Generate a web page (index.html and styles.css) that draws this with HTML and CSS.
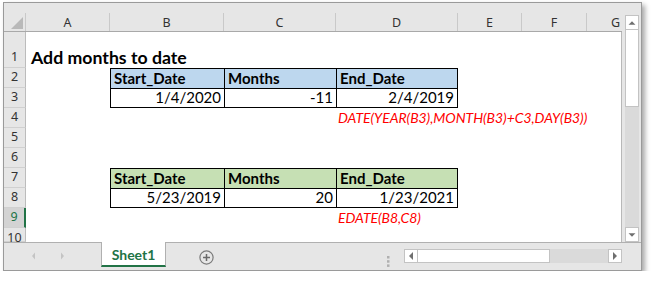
FILE: index.html
```html
<!DOCTYPE html>
<html>
<head>
<meta charset="utf-8">
<link rel="stylesheet" href="styles.css">
</head>
<body>
<div class="window">
  <div class="main">
    <div class="sheet">
      <div class="colheads">
        <div class="corner"><svg width="12" height="12" viewBox="0 0 12 12"><polygon points="12,0 12,12 0,12" fill="#b9b9b9"/></svg></div>
        <div class="ch wa">A</div>
        <div class="ch wb">B</div>
        <div class="ch wc">C</div>
        <div class="ch wd">D</div>
        <div class="ch we">E</div>
        <div class="ch wf">F</div>
        <div class="ch wg">G</div>
      </div>
      <div class="rows">
        <div class="row tall">
          <div class="rh">1</div>
          <div class="cell wa title">Add months to date</div>
        </div>
        <div class="row">
          <div class="rh">2</div>
          <div class="cell wa"></div>
          <div class="cell wb tb blue bold">Start_Date</div>
          <div class="cell wc tb blue bold">Months</div>
          <div class="cell wd tb blue bold last">End_Date</div>
        </div>
        <div class="row">
          <div class="rh">3</div>
          <div class="cell wa"></div>
          <div class="cell wb tb bottom num">1/4/2020</div>
          <div class="cell wc tb bottom num">-11</div>
          <div class="cell wd tb bottom last num">2/4/2019</div>
        </div>
        <div class="row">
          <div class="rh">4</div>
          <div class="cell wa"></div>
          <div class="cell wb"></div>
          <div class="cell wc"></div>
          <div class="cell wd formula">DATE(YEAR(B3),MONTH(B3)+C3,DAY(B3))</div>
        </div>
        <div class="row"><div class="rh">5</div></div>
        <div class="row"><div class="rh">6</div></div>
        <div class="row">
          <div class="rh">7</div>
          <div class="cell wa"></div>
          <div class="cell wb tb green bold">Start_Date</div>
          <div class="cell wc tb green bold">Months</div>
          <div class="cell wd tb green bold last">End_Date</div>
        </div>
        <div class="row">
          <div class="rh">8</div>
          <div class="cell wa"></div>
          <div class="cell wb tb bottom num">5/23/2019</div>
          <div class="cell wc tb bottom num">20</div>
          <div class="cell wd tb bottom last num">1/23/2021</div>
        </div>
        <div class="row">
          <div class="rh selected">9</div>
          <div class="cell wa"></div>
          <div class="cell wb"></div>
          <div class="cell wc"></div>
          <div class="cell wd formula">EDATE(B8,C8)</div>
        </div>
        <div class="row short"><div class="rh">10</div></div>
      </div>
    </div>
    <div class="vscroll">
      <div class="sbtn"><svg width="14" height="14" viewBox="0 0 14 14"><polygon points="3,9 11,9 7,5" fill="#6f6f6f"/></svg></div>
      <div class="vthumb"></div>
      <div class="vtrack"></div>
      <div class="sbtn"><svg width="14" height="14" viewBox="0 0 14 14"><polygon points="3,5 11,5 7,9" fill="#6f6f6f"/></svg></div>
    </div>
  </div>
  <div class="tabbar">
    <div class="nav">
      <svg width="97" height="14" viewBox="0 0 97 14"><polygon points="28,7 31,3.5 31,10.5" fill="#c4c4c4"/><polygon points="57,3.5 60,7 57,10.5" fill="#c4c4c4"/></svg>
    </div>
    <div class="tab">Sheet1</div>
    <div class="plus"><svg width="15" height="15" viewBox="0 0 15 15"><circle cx="7.5" cy="7.5" r="6.6" fill="none" stroke="#7b7b7b" stroke-width="1.2"/><path d="M7.5 4v7M4 7.5h7" stroke="#6a6a6a" stroke-width="1.5"/></svg></div>
    <div class="spacer"></div>
    <div class="dots"><svg width="3" height="11" viewBox="0 0 3 11"><rect x="0" y="0" width="2.5" height="2.5" fill="#b0b0b0"/><rect x="0" y="4.2" width="2.5" height="2.5" fill="#b0b0b0"/><rect x="0" y="8.4" width="2.5" height="2.5" fill="#b0b0b0"/></svg></div>
    <div class="hscroll">
      <div class="sbtn"><svg width="12" height="12" viewBox="0 0 12 12"><polygon points="4,6 8,2 8,10" fill="#6f6f6f"/></svg></div>
      <div class="hthumb"></div>
      <div class="htrack"></div>
      <div class="sbtn"><svg width="12" height="12" viewBox="0 0 12 12"><polygon points="4,2 8,6 4,10" fill="#6f6f6f"/></svg></div>
    </div>
  </div>
</div>
</body>
</html>
```
FILE: styles.css
```css
* { box-sizing: border-box; }
html, body { margin: 0; padding: 0; background: #fff; }
body { padding: 2px 0 0 3px; font-family: Lato, "Open Sans", sans-serif; }

.window {
  width: 639px;
  height: 269px;
  border: 1px solid #9a9a9a;
  background: #e6e6e6;
  box-shadow: 3px 3px 5px rgba(0,0,0,0.35);
  display: flex;
  flex-direction: column;
}
.main { display: flex; height: 239px; }
.sheet { width: 618px; display: flex; flex-direction: column; }

.colheads {
  display: flex;
  height: 29px;
  border-bottom: 1px solid #a9a9a9;
  background: #e6e6e6;
}
.corner, .ch {
  margin-top: 10px;
  height: 18px;
  border-right: 1px solid #c9c9c9;
}
.corner { width: 22px; display: flex; align-items: flex-end; justify-content: flex-end; padding: 0 2px 2px 0; }
.ch {
  display: flex; align-items: center; justify-content: center;
  font-family: "Noto Sans", sans-serif; font-size: 12.5px; color: #333;
}
.ch.wg { border-right: none; justify-content: flex-end; padding-right: 1px; }

.wa { width: 84px; }
.wb { width: 114px; }
.wc { width: 112px; }
.wd { width: 122px; }
.we { width: 64px; }
.wf { width: 65px; }
.wg { width: 34px; }

.rows { height: 210px; background: #fff; overflow: hidden; border-right: 1px solid #b8b8b8; }
.row { display: flex; height: 20px; }
.row.tall { height: 36px; }
.row.short { height: 14px; }
.rh {
  width: 22px; flex: none;
  background: #e6e6e6;
  border-right: 1px solid #bcbcbc;
  border-bottom: 1px solid #d0d0d0;
  display: flex; align-items: flex-end; justify-content: center;
  padding-bottom: 1px;
  font-family: "Noto Sans", sans-serif; font-size: 12.5px; line-height: 18px; color: #333;
}
.row.tall .rh { padding-bottom: 1px; }
.row.short .rh { align-items: flex-start; padding-top: 1px; }
.rh.selected { background: #d3d3d3; color: #217346; border-right: 2px solid #217346; }

.cell {
  flex: none;
  display: flex; align-items: flex-end;
  padding: 0 3px 1px 3px;
  font-size: 15px; line-height: 18px; color: #000;
  white-space: nowrap;
}
.title { font-weight: bold; font-size: 17.7px; padding-left: 5px; padding-bottom: 1px; overflow: visible; }
.tb { border-left: 1px solid #000; border-top: 1px solid #000; }
.tb.last { border-right: 1px solid #000; }
.tb.bottom { border-bottom: 1px solid #000; }
.blue { background: #bdd7ee; }
.green { background: #c6e0b4; }
.bold { font-weight: bold; }
.num { justify-content: flex-end; }
.formula { color: #ff0000; font-style: italic; font-size: 14px; overflow: visible; padding-left: 2px; letter-spacing: -0.05px; }

.vscroll {
  width: 19px;
  padding: 12px 2px 0 3px;
  display: flex; flex-direction: column;
  background: #e6e6e6;
}
.sbtn {
  width: 14px; height: 15px; flex: none;
  background: #fff; border: 1px solid #c3c3c3;
  display: flex; align-items: center; justify-content: center;
}
.vthumb { height: 77px; background: #fff; border: 1px solid #c3c3c3; border-top: none; }
.vtrack { flex: 1; background: #dadada; }

.tabbar {
  height: 28px;
  border-top: 1px solid #b0b0b0;
  display: flex;
  align-items: flex-start;
  padding-right: 19px;
}
.nav { width: 97px; height: 26px; display: flex; align-items: center; }
.tab {
  width: 65px; height: 25px; margin-top: -1px;
  background: #fff;
  border-left: 1px solid #b0b0b0; border-right: 1px solid #b0b0b0;
  border-bottom: 2px solid #217346;
  display: flex; align-items: center; justify-content: center;
  font-weight: bold; font-size: 14px; color: #217346;
  padding-top: 2px;
}
.plus { margin: 6px 0 0 33px; width: 15px; height: 15px; }
.spacer { flex: 1; }
.dots { margin: 8px 14px 0 0; height: 11px; }
.hscroll { display: flex; margin-top: 6px; height: 14px; width: 218px; }
.hscroll .sbtn { height: 14px; width: 14px; }
.hthumb { width: 132px; background: #fff; border: 1px solid #c3c3c3; border-left: none; }
.htrack { flex: 1; background: #dadada; }
```
